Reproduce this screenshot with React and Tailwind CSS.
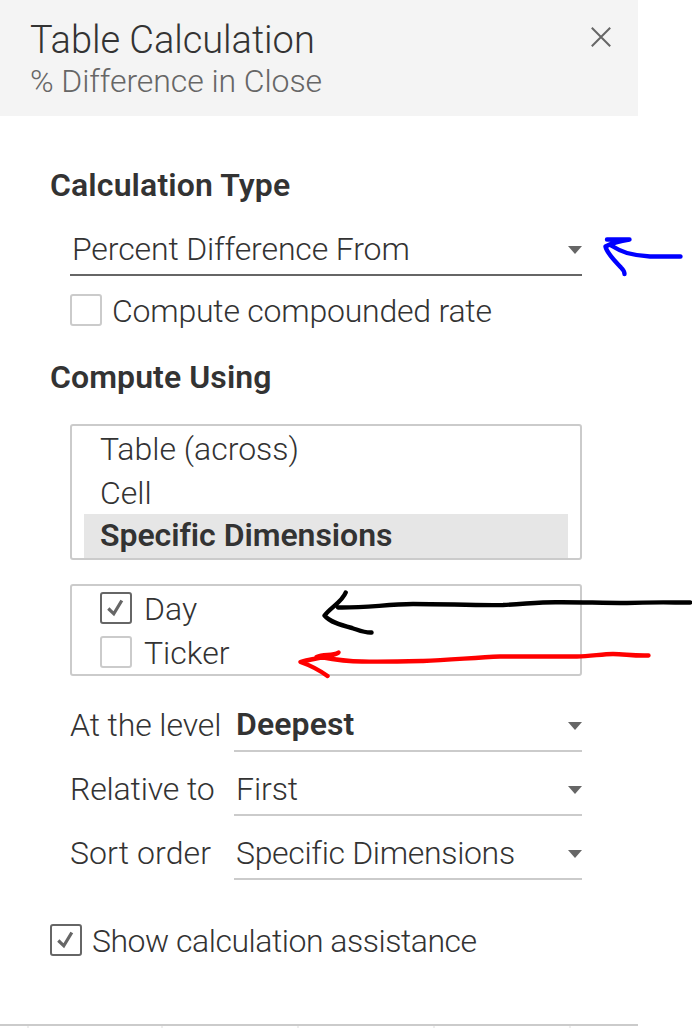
import React, { useState } from "react";

const LEVELS = [
  { label: "At the level", value: "Deepest", labelClass: "tracking-[-0.1px]", valueClass: "-mt-1 font-semibold tracking-[0.1px]" },
  { label: "Relative to", value: "First", labelClass: "tracking-[-0.15px]", valueClass: "-mt-0.5 tracking-[-0.1px]" },
  { label: "Sort order", value: "Specific Dimensions", labelClass: "tracking-[0.1px]", valueClass: "-mt-0.5 tracking-[-0.32px]" },
];

const Caret = () => (
  <svg width="14" height="8" viewBox="0 0 14 8" className="shrink-0 mb-px">
    <path d="M0 0h14L7 8z" fill="#666" />
  </svg>
);

const Checkbox = ({ checked, onClick }) => (
  <button
    type="button"
    role="checkbox"
    aria-checked={checked}
    onClick={onClick}
    className={`w-8 h-8 shrink-0 border-2 rounded-[3px] bg-white ${
      checked ? "border-[#666]" : "border-[#cbcbcb]"
    }`}
  >
    {checked && (
      <svg width="28" height="28" viewBox="2 2 28 28" fill="none">
        <path d="M8.3 16.5L13.8 21.8L21.8 8.5" stroke="#666" strokeWidth="3.2" />
      </svg>
    )}
  </button>
);

const App = () => {
  const [compounded, setCompounded] = useState(false);
  const [day, setDay] = useState(true);
  const [ticker, setTicker] = useState(false);
  const [assist, setAssist] = useState(true);

  return (
    <div className="relative w-[692px] h-[1028px] overflow-hidden bg-white font-['Roboto',sans-serif] font-light text-[32px] text-[#333] whitespace-nowrap">
      <div className="w-[638px] h-full flex flex-col">
        {/* Header */}
        <header className="h-[116px] bg-[#f4f4f4] pl-[30px] pr-[27px] pt-5 flex justify-between items-start">
          <div>
            <h1 className="text-[38px] leading-10 tracking-[-0.04px]">Table Calculation</h1>
            <p className="leading-10 mt-px text-[#666] tracking-[-0.08px]">% Difference in Close</p>
          </div>

          <button type="button" className="mt-[7px]">
            <svg width="20" height="20" viewBox="0 0 20 20" className="block">
              <path d="M.8 .8L19.2 19.2M19.2 .8L.8 19.2" stroke="#666" strokeWidth="2" />
            </svg>
          </button>
        </header>

        {/* Body */}
        <main className="pl-[50px] pr-14 pt-[53px]">
          <h2 className="font-semibold leading-8 tracking-[0.13px]">Calculation Type</h2>

          <div className="ml-5 mt-[26px] h-[49px] border-b-2 border-[#666] pl-0.5 flex items-center justify-between">
            <span className="leading-[44px] -mt-[3px] tracking-[-0.13px]">
              Percent Difference From
            </span>
            <Caret />
          </div>

          <div className="ml-5 mt-[18px] flex gap-2.5">
            <Checkbox checked={compounded} onClick={() => setCompounded(!compounded)} />
            <span className="leading-[34px] h-8 tracking-[-0.22px]">Compute compounded rate</span>
          </div>

          <h2 className="font-semibold leading-8 mt-[35px] tracking-[0.08px]">Compute Using</h2>

          <div className="ml-5 mt-[31px] h-[136px] border-2 border-[#cbcbcb] rounded-[3px] px-3 leading-[46px]">
            <div className="pl-4 h-11">Table (across)</div>
            <div className="pl-4 h-11">Cell</div>
            <div className="pl-4 h-11 bg-[#e6e6e6] font-semibold leading-[43px] tracking-[-0.05px]">
              Specific Dimensions
            </div>
          </div>

          <div className="ml-5 mt-6 h-[92px] border-2 border-[#cbcbcb] rounded-[3px] pl-7">
            <div className="h-11 flex items-center gap-3">
              <Checkbox checked={day} onClick={() => setDay(!day)} />
              <span className="leading-[44px] pt-0.5">Day</span>
            </div>
            <div className="h-11 flex items-center gap-3">
              <Checkbox checked={ticker} onClick={() => setTicker(!ticker)} />
              <span className="leading-[44px] pt-0.5">Ticker</span>
            </div>
          </div>

          <div className="ml-5 mt-[26px] flex flex-col gap-3.5">
            {LEVELS.map((row) => (
              <div key={row.label} className="h-[50px] flex leading-[46px]">
                <span className={`w-[164px] shrink-0 ${row.labelClass}`}>{row.label}</span>
                <div className="flex-1 border-b-2 border-[#cbcbcb] pl-0.5 flex items-center justify-between">
                  <span className={row.valueClass}>{row.value}</span>
                  <Caret />
                </div>
              </div>
            ))}
          </div>

          <div className="mt-11 flex gap-2.5">
            <Checkbox checked={assist} onClick={() => setAssist(!assist)} />
            <span className="leading-[34px] h-8 tracking-[-0.48px]">
              Show calculation assistance
            </span>
          </div>
        </main>

        {/* Bottom edge */}
        <footer className="mt-auto h-1 border-t-2 border-[#cbcbcb] pl-[27px] flex gap-[134px]">
          <i className="w-0.5 h-0.5 bg-[#eee] -mr-0.5" />
          <i className="w-0.5 h-0.5 bg-[#eee]" />
          <i className="w-0.5 h-0.5 bg-[#eee]" />
          <i className="w-0.5 h-0.5 bg-[#eee]" />
          <i className="w-0.5 h-0.5 bg-[#eee]" />
        </footer>
      </div>

      {/* Hand drawn arrows */}
      <svg
        width="692"
        height="1028"
        viewBox="0 0 692 1028"
        fill="none"
        strokeWidth="4.4"
        strokeLinecap="round"
        strokeLinejoin="round"
        className="absolute inset-0 pointer-events-none"
      >
        <path
          stroke="#00f"
          d="M607 239.5H629.5C622 240.5 612 243 605.5 246.5C607 254 618 264 621 267.500Q624.500 271 624.500 274M612 246Q620 251 627 253Q638 256 650 256.500H680.500"
        />
        <path
          stroke="#000"
          d="M345.700 592.500C342 602 331 607 324.500 615.500C330 622 340 625 352 628C361 631 365 633 371.500 632.500M338 607.500C365 608 385 604.500 413 604C445 604 475 605.500 503 605C525 604 540 602 557 602.200C580 602 600 603 627 603C650 602 670 602.500 690 602.500"
        />
        <path
          stroke="#f00"
          d="M316.500 657C324 654 333 656 338.500 652.500C337 656 308 659 300.500 662Q315 667 327.500 676M320.500 657Q345 661.500 362 661.500C382 662 402 661.500 423 661C450 660 475 657.500 500 656.500H577C590 656.500 602 654 613 654C625 654 632 656 648.500 655.500"
        />
      </svg>
    </div>
  );
};

export default App;
